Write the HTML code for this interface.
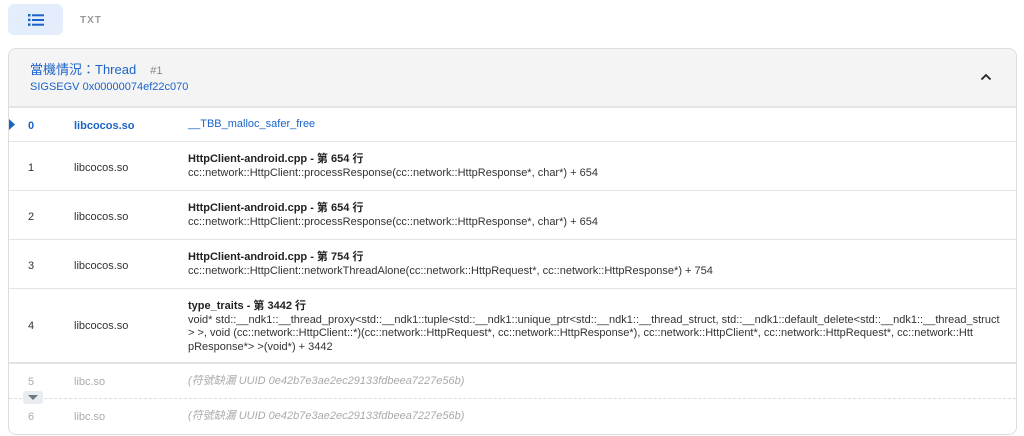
<!DOCTYPE html>
<html><head><meta charset="utf-8"><style>
*{box-sizing:border-box;margin:0;padding:0}
body{width:1024px;height:436px;background:#fff;font-family:"Liberation Sans","Noto Sans CJK TC",sans-serif;font-size:11px;color:#333;position:relative;overflow:hidden}
.tab1{position:absolute;left:8px;top:4px;width:55px;height:31px;background:#e3edfb;border-radius:6px}
.txt{position:absolute;left:80px;top:15px;font-size:10px;font-weight:bold;color:#999;letter-spacing:1px}
.card{position:absolute;left:8px;top:48px;width:1009px;height:387px;border:1px solid #ddd;border-radius:8px;overflow:hidden}
.hdr{height:59px;background:#f4f4f4;border-bottom:2px solid #e4e4e4;position:relative}
.t1{position:absolute;left:21px;top:10px;font-size:13px;color:#1a63c9}
.t1 .n{color:#888;font-size:11px;margin-left:14px}
.t2{position:absolute;left:21px;top:32px;font-size:11px;color:#1a63c9}
.chev{position:absolute;right:24px;top:24px}
.row{position:relative;border-bottom:1px solid #e4e4e4}
.row .i{position:absolute;left:19px}
.row .l{position:absolute;left:65px}
.row .f{position:absolute;left:179px;width:812px;line-height:13.5px;word-break:break-all}
.f b{color:#222}
.g{color:#aaa}
.g .f{font-style:italic}
</style></head><body>
<div class="tab1"><svg style="position:absolute;left:20px;top:10px" width="16" height="12"><g fill="#1a63c9"><rect x="0" y="0" width="2.5" height="2.5"/><rect x="0" y="4.7" width="2.5" height="2.5"/><rect x="0" y="9.4" width="2.5" height="2.5"/><rect x="4" y="0.3" width="12" height="2"/><rect x="4" y="5" width="12" height="2"/><rect x="4" y="9.7" width="12" height="2"/></g></svg></div>
<div class="txt">TXT</div>
<div class="card">
<div class="hdr"><div class="t1">當機情況：Thread<span class="n">#1</span></div><div class="t2">SIGSEGV 0x00000074ef22c070</div>
<svg class="chev" width="12" height="8"><path d="M1.5 6.5 L6 2 L10.5 6.5" stroke="#222" stroke-width="1.8" fill="none"/></svg></div>
<div class="row" style="height:34px;color:#1a63c9"><svg style="position:absolute;left:0;top:11px" width="6" height="11"><path d="M0 0 L6 5.5 L0 11Z" fill="#1a63c9"/></svg><span class="i" style="top:12px;font-weight:bold">0</span><span class="l" style="top:12px;font-weight:bold">libcocos.so</span><span class="f" style="top:10px">__TBB_malloc_safer_free</span></div>
<div class="row" style="height:49px"><span class="i" style="top:20px">1</span><span class="l" style="top:20px">libcocos.so</span><span class="f" style="top:11px"><b>HttpClient-android.cpp - 第 654 行</b><br>cc::network::HttpClient::processResponse(cc::network::HttpResponse*, char*) + 654</span></div>
<div class="row" style="height:49px"><span class="i" style="top:20px">2</span><span class="l" style="top:20px">libcocos.so</span><span class="f" style="top:11px"><b>HttpClient-android.cpp - 第 654 行</b><br>cc::network::HttpClient::processResponse(cc::network::HttpResponse*, char*) + 654</span></div>
<div class="row" style="height:49px"><span class="i" style="top:20px">3</span><span class="l" style="top:20px">libcocos.so</span><span class="f" style="top:11px"><b>HttpClient-android.cpp - 第 754 行</b><br>cc::network::HttpClient::networkThreadAlone(cc::network::HttpRequest*, cc::network::HttpResponse*) + 754</span></div>
<div class="row" style="height:75px;border-bottom:2px solid #e4e4e4"><span class="i" style="top:31px">4</span><span class="l" style="top:31px">libcocos.so</span><span class="f" style="top:11px"><b>type_traits - 第 3442 行</b><br>void* std::__ndk1::__thread_proxy&lt;std::__ndk1::tuple&lt;std::__ndk1::unique_ptr&lt;std::__ndk1::__thread_struct, std::__ndk1::default_delete&lt;std::__ndk1::__thread_struct<br>&gt; &gt;, void (cc::network::HttpClient::*)(cc::network::HttpRequest*, cc::network::HttpResponse*), cc::network::HttpClient*, cc::network::HttpRequest*, cc::network::Htt<br>pResponse*&gt; &gt;(void*) + 3442</span></div>
<div class="row g" style="height:35px;border-bottom:1px dashed #ddd"><span class="i" style="top:12px">5</span><span class="l" style="top:12px">libc.so</span><span class="f" style="top:11px">(符號缺漏 UUID 0e42b7e3ae2ec29133fdbeea7227e56b)</span></div>
<div style="position:absolute;left:14px;top:342px;width:20px;height:13px;background:#e8ecf0;border-radius:3px"><svg style="position:absolute;left:5px;top:4px" width="10" height="6"><path d="M0 0H10L5 5Z" fill="#6a7784"/></svg></div>
<div class="row g" style="height:35px;border-bottom:none"><span class="i" style="top:12px">6</span><span class="l" style="top:12px">libc.so</span><span class="f" style="top:11px">(符號缺漏 UUID 0e42b7e3ae2ec29133fdbeea7227e56b)</span></div>
</div>
</body></html>
